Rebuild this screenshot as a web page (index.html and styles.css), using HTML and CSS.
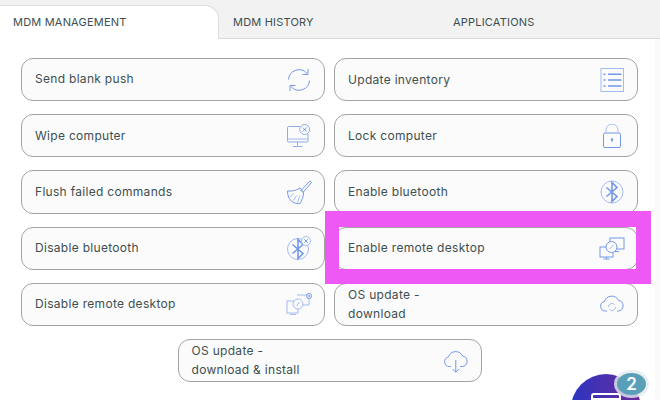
FILE: index.html
```html
<!DOCTYPE html>
<html lang="en">
<head>
<meta charset="utf-8">
<title>MDM Management</title>
<link rel="stylesheet" href="styles.css">
</head>
<body>
<div class="tabs">
  <div class="tab tab-active">MDM MANAGEMENT</div>
  <div class="tab tab-history">MDM HISTORY</div>
  <div class="tab tab-apps">APPLICATIONS</div>
</div>
<div class="actions">
  <button class="action"><span>Send blank push</span>
    <svg class="icon" viewBox="0 0 24 24"><path d="M1.500 11.500A10.500 10.500 0 0 1 20 5.500"/><path d="M21 1v5.500h-5.500"/><path d="M22.500 12.500A10.500 10.500 0 0 1 4 18.500"/><path d="M3 23v-5.500h5.500"/></svg></button>
  <button class="action"><span>Update inventory</span>
    <svg class="icon" viewBox="0 0 24 24"><rect class="pale" x="1" y=".5" width="22.500" height="23"/><path class="thick" d="M8 6.300h13.500M8 12h13.500M8 18h13.500"/><path class="thick" d="M3.500 6.300h2M3.500 12h2M3.500 18h2"/></svg></button>
  <button class="action"><span>Wipe computer</span>
    <svg class="icon" viewBox="0 0 24 24"><path class="soft" d="M13 2.500H1.500a1 1 0 0 0-1 1V17a1 1 0 0 0 1 1h19a1 1 0 0 0 .5-1V10"/><path class="pale" d="M.5 15h20.500"/><path class="soft" d="M10.500 18v3.500M6 22.500h9.500"/><circle class="soft" cx="17.700" cy="5.500" r="5"/><path d="M15.700 3.500l4 4M19.700 3.500l-4 4"/></svg></button>
  <button class="action"><span>Lock computer</span>
    <svg class="icon" viewBox="0 0 24 24"><rect x="3.500" y="9" width="17" height="14.500" rx="1.500"/><path class="pale" d="M6 9V6a6 6 0 0 1 12 0v3"/><circle class="dot" cx="12" cy="15.500" r="1.200"/><path d="M12 16v2"/></svg></button>
  <button class="action"><span>Flush failed commands</span>
    <svg class="icon broom" viewBox="0 0 26 26"><path d="M15 11.500L24 2l1.500 1.500-8.500 10z"/><path d="M1.500 12c5.500 .5 9.500-1 12.500-3l3.500 4.500c0 4-1.500 8-3.500 11-3 .5-6-.5-8-2-3-2-4.500-6-4.500-10.500z"/><path class="pale" d="M4.500 18l3-3.500M7.500 21.500l3-5M11.500 23.500l2.500-7"/></svg></button>
  <button class="action"><span>Enable bluetooth</span>
    <svg class="icon" viewBox="0 0 24 24"><circle class="pale" cx="12" cy="12" r="11"/><path class="thick" d="M6.500 7.500l10.500 9-5 5V2.500l5 5-10.500 9"/></svg></button>
  <button class="action"><span>Disable bluetooth</span>
    <svg class="icon" viewBox="0 0 24 24"><circle class="pale" cx="11" cy="13" r="10.500"/><path class="thick" d="M5.500 8.500l10.500 9-5 5V3.500l5 5-10.500 9"/><circle class="cutout pale" cx="19" cy="5" r="4.500"/><path d="M17.300 3.300l3.400 3.400M20.700 3.300l-3.400 3.400"/></svg></button>
  <button class="action"><span>Enable remote desktop</span>
    <svg class="icon wide" viewBox="0 0 26 24"><rect x="11" y="2" width="14" height="11"/><path d="M16 13v2.500h4"/><rect x="1" y="11" width="13" height="10"/><path d="M7.500 21v2M4.500 23h6"/><circle class="cutout" cx="12.500" cy="11" r="5.500"/><path class="pale" d="M10.500 13l4-4"/></svg></button>
  <button class="action"><span>Disable remote desktop</span>
    <svg class="icon wide" viewBox="0 0 26 24"><path class="pale" d="M11 3h12v10H14"/><circle class="cutout" cx="23" cy="4" r="2.500"/><circle class="dot" cx="23" cy="4" r=".9"/><rect class="pale" x="1" y="9" width="11" height="12"/><circle class="cutout pale" cx="12" cy="12" r="5"/><path class="pale" d="M10.500 14l3-4"/><path class="pale" d="M4 22.500h6"/></svg></button>
  <button class="action"><span>OS update -<br>download</span>
    <svg class="icon" viewBox="0 0 24 18"><path d="M7 16H5.500a4.800 4.800 0 0 1-1-9.500 7.500 7.500 0 0 1 14-1A5.300 5.300 0 0 1 18.500 16H17"/><path class="pale" d="M8.500 12a3.500 3.500 0 0 1 6-2.500M15.500 12a3.500 3.500 0 0 1-6 2.500"/></svg></button>
  <button class="action"><span>OS update -<br>download &amp; install</span>
    <svg class="icon" viewBox="0 0 24 24"><path d="M7 17.500H5.500a4.800 4.800 0 0 1-1-9.500 7.500 7.500 0 0 1 14-1A5.300 5.300 0 0 1 18.500 17.500H16"/><path d="M11.800 11v12M8.500 20l3.300 3.300 3.300-3.300"/></svg></button>
</div>
<div class="highlight"></div>
<div class="scroll-track"></div>
<div class="fab-clip">
  <div class="fab">
    <svg class="fab-icon" viewBox="0 0 30 12"><path d="M1 12V3a2 2 0 0 1 2-2h24a2 2 0 0 1 2 2v9M1 6h28"/></svg>
  </div>
</div>
<div class="badge">2</div>
</body>
</html>
```

FILE: styles.css
```css
* {
  box-sizing: border-box;
}

html,
body {
  height: 100%;
}

body {
  margin: 0;
  position: relative;
  overflow: hidden;
  background: #ffffff;
  color: #3d4f50;
  font-family: Inter, "Liberation Sans", sans-serif;
}

.tabs {
  display: flex;
  height: 39px;
  padding-top: 5px;
  background: #f2f2f2;
  border-bottom: 1px solid #d9d9d9;
  font-size: 11px;
  letter-spacing: 0.2px;
}

.tab {
  display: flex;
  align-items: center;
  height: 33px;
}

.tab-active {
  width: 219px;
  height: 34px;
  padding: 0 0 2px 13px;
  background: #ffffff;
  border: 1px solid #dddddd;
  border-width: 1px 1px 0 0;
  border-radius: 0 14px 0 0;
}

.tab-history {
  width: 220px;
  padding-left: 14px;
}

.tab-apps {
  padding-left: 14px;
}

.actions {
  display: grid;
  grid-template-columns: 304px 304px;
  gap: 13px 9px;
  margin: 19px 0 0 21px;
  width: 617px;
}

.action {
  display: flex;
  align-items: center;
  justify-content: space-between;
  height: 43.2px;
  padding: 0 13px 1px 13px;
  background: #fbfbfb;
  border: 1px solid #a3a3a3;
  border-radius: 12px;
  color: inherit;
  font: inherit;
  font-size: 12px;
  line-height: 19px;
  letter-spacing: 0.3px;
  text-align: left;
}

.action:first-child span {
  margin-top: -1px;
}

.action:last-child {
  grid-column: 1 / 3;
  justify-self: center;
  width: 304px;
}

.icon {
  flex: none;
  width: 24px;
  height: 24px;
  margin-top: 1px;
  fill: none;
  stroke: #7398e6;
  stroke-width: 1;
}

.icon.wide {
  width: 26px;
  margin-right: -1px;
}

.icon.broom {
  width: 26px;
  height: 26px;
  margin-right: -1px;
}

.icon .pale {
  stroke: #a3bcf0;
}

.icon .soft {
  stroke: #8dabea;
}

.icon .thick {
  stroke-width: 1.600;
}

.icon .dot {
  fill: #6f94e3;
  stroke: none;
}

.icon .cutout {
  fill: #fbfbfb;
}

.highlight {
  position: absolute;
  left: 325px;
  top: 211px;
  width: 326px;
  height: 73px;
  border: solid #ee58f5;
  border-width: 16px 15px 15px 14px;
}

.scroll-track {
  position: absolute;
  right: 0;
  top: 39px;
  bottom: 0;
  width: 5px;
  background: #fafafa;
}

.fab-clip {
  position: absolute;
  left: 571px;
  top: 374px;
  width: 70px;
  height: 26px;
  overflow: hidden;
}

.fab {
  width: 70px;
  height: 70px;
  border-radius: 50%;
  background: linear-gradient(90deg, #2b36c2, #6e2a9b);
}

.fab-icon {
  display: block;
  width: 30px;
  height: 12px;
  margin: 0 auto;
  position: relative;
  top: 19px;
  fill: none;
  stroke: #ffffff;
  stroke-width: 2;
}

.badge {
  position: absolute;
  left: 617px;
  top: 373px;
  width: 29px;
  height: 22px;
  border-radius: 50%;
  background: #5a9fb8;
  box-shadow: 0 0 0 3px rgba(225, 235, 238, 0.8);
  color: #ffffff;
  font-size: 17px;
  font-weight: 600;
  line-height: 22px;
  text-align: center;
}
```
